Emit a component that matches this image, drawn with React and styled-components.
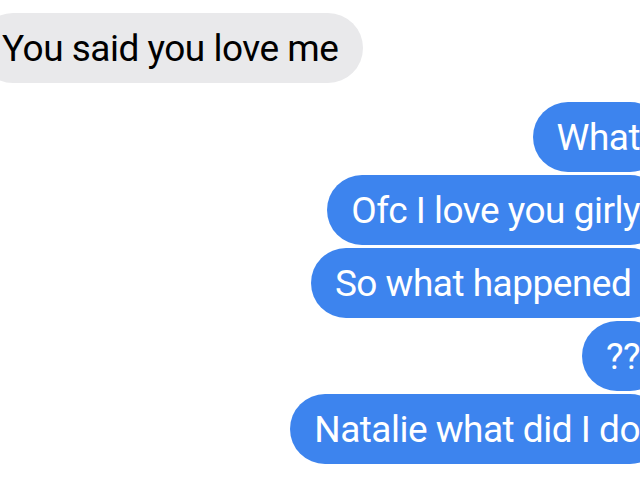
import React from "react";
import styled, { createGlobalStyle } from "styled-components";

const Global = createGlobalStyle`
  html, body { margin: 0; padding: 0; background: #ffffff; }
  body { overflow: hidden; width: 640px; height: 480px; }
`;

const Screen = styled.div`
  width: 640px;
  height: 480px;
  overflow: hidden;
  background: #ffffff;
  padding-top: 13px;
  box-sizing: border-box;
  font-family: Roboto, "Liberation Sans", sans-serif;
`;

const Bubble = styled.div`
  display: inline-flex;
  align-items: center;
  height: 70px;
  border-radius: 35px;
  padding: 0 25px 0 24px;
  box-sizing: border-box;
  font-size: 37px;
  letter-spacing: -0.5px;
  white-space: pre;
  background: ${(p) => (p.$me ? "#3d84ee" : "#e9e9eb")};
  color: ${(p) => (p.$me ? "#ffffff" : "#000000")};
`;

const Received = styled.div`
  display: flex;
  margin-left: -22px;
`;

const SentColumn = styled.div`
  display: flex;
  flex-direction: column;
  align-items: flex-end;
  gap: 3px;
  margin-top: 19px;
  margin-right: -25px;
`;

const sent = [
  "What",
  "Ofc I love you girly",
  "So what happened\u00a0",
  "??",
  "Natalie what did I do",
];

export default function App() {
  return (
    <>
      <Global />
      <Screen>
        <Received>
          <Bubble>You said you love me</Bubble>
        </Received>
        <SentColumn>
          {sent.map((t, i) => (
            <Bubble key={i} $me>
              {t}
            </Bubble>
          ))}
        </SentColumn>
      </Screen>
    </>
  );
}
